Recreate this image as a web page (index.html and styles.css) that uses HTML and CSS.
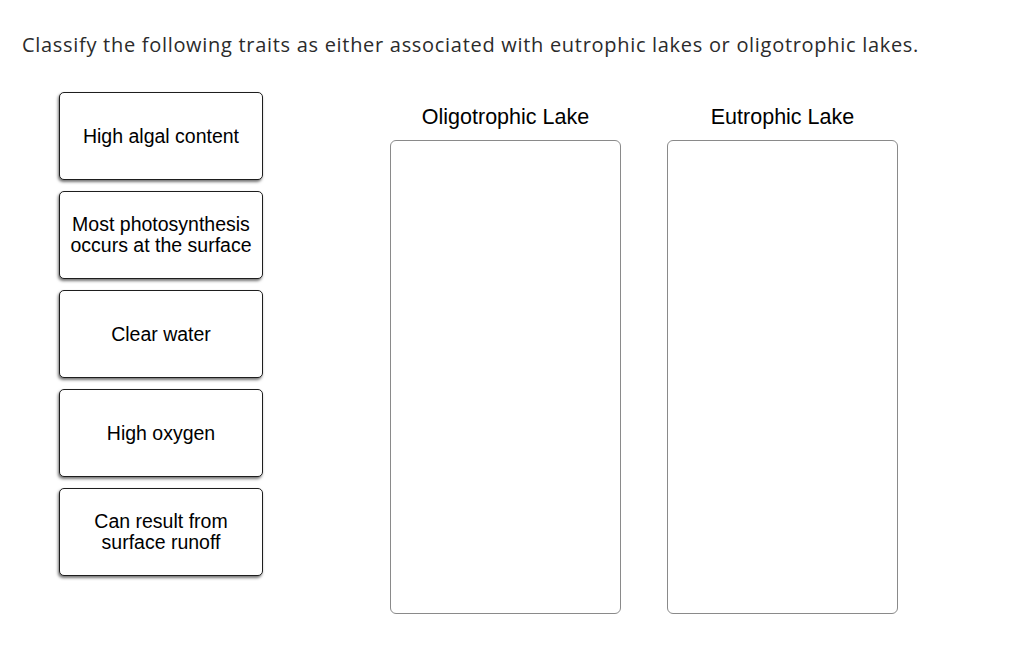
FILE: index.html
```html
<!DOCTYPE html>
<html>
<head>
<meta charset="utf-8">
<link rel="stylesheet" href="styles.css">
</head>
<body>
<p class="prompt">Classify the following traits as either associated with eutrophic lakes or oligotrophic lakes.</p>
<div class="board">
  <div class="cards">
    <div class="card">High algal content</div>
    <div class="card">Most photosynthesis<br>occurs at the surface</div>
    <div class="card">Clear water</div>
    <div class="card">High oxygen</div>
    <div class="card">Can result from<br>surface runoff</div>
  </div>
  <div class="zones">
    <div class="zone-col">
      <div class="zone-title">Oligotrophic Lake</div>
      <div class="zone"></div>
    </div>
    <div class="zone-col">
      <div class="zone-title">Eutrophic Lake</div>
      <div class="zone"></div>
    </div>
  </div>
</div>
</body>
</html>
```
FILE: styles.css
```css
html, body {
  margin: 0;
  padding: 0;
  background: #fff;
}
.prompt {
  margin: 0;
  padding: 32px 0 0 22px;
  font-family: "Open Sans", sans-serif;
  font-size: 20px;
  letter-spacing: 0.7px;
  line-height: 26px;
  color: #2b2b2b;
}
.board {
  display: flex;
  padding: 34px 0 0 59px;
  font-family: "Liberation Sans", Arial, sans-serif;
  color: #000;
}
.cards {
  display: flex;
  flex-direction: column;
  gap: 11px;
}
.card {
  box-sizing: border-box;
  width: 204px;
  height: 88px;
  border: 1px solid #1e1e1e;
  border-radius: 5px;
  box-shadow: -1px 2px 3px rgba(0,0,0,0.55);
  display: flex;
  align-items: center;
  justify-content: center;
  text-align: center;
  font-size: 19.5px;
  line-height: 21px;
  background: #fff;
}
.zones {
  display: flex;
  gap: 46px;
  margin-left: 127px;
  margin-top: 13px;
}
.zone-col {
  display: flex;
  flex-direction: column;
  width: 231px;
}
.zone-title {
  text-align: center;
  font-size: 21.5px;
  line-height: 24px;
  height: 35px;
}
.zone {
  box-sizing: border-box;
  height: 474px;
  border: 1.5px solid #8a8a8a;
  border-radius: 6px;
}
```
